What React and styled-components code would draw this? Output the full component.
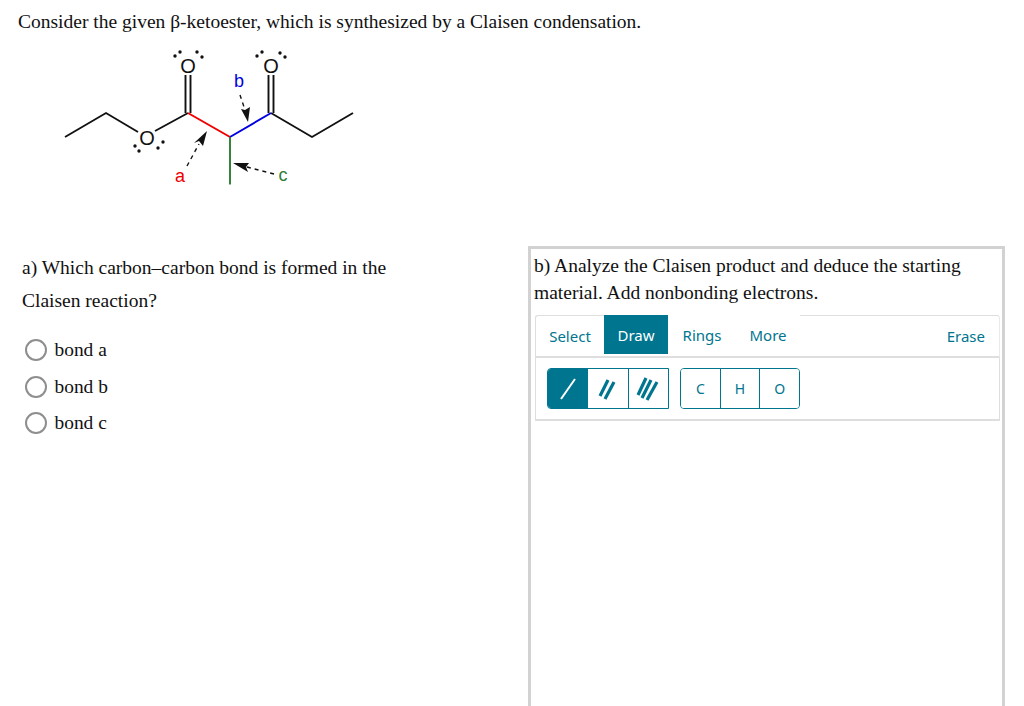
import React from "react";
import styled, { createGlobalStyle } from "styled-components";

const teal = "#00758f";
const serif = `"Liberation Serif", "Times New Roman", serif`;
const ui = `"Noto Sans", "Open Sans", sans-serif`;

const Global = createGlobalStyle`
html, body { margin: 0; padding: 0; background: #fff; overflow: hidden; }
* { box-sizing: border-box; }
`;
const Page = styled.div`
  width: 1024px;
  height: 706px;
  display: flex;
  flex-direction: column;
  font-family: ${serif};
  color: #111;
  overflow: hidden;
`;
const Title = styled.div`
  font-size: 19.5px;
  line-height: 22px;
  padding: 11px 0 0 18px;
`;
const Figure = styled.div`
  height: 213px;
  padding: 7px 0 0 50px;
`;
const Columns = styled.div`
  flex: 1;
  display: flex;
  justify-content: space-between;
  padding-right: 19px;
`;
const Left = styled.div`
  width: 420px;
  padding: 5px 0 0 22px;
`;
const Question = styled.div`
  font-size: 19.5px;
  line-height: 33px;
  width: 390px;
`;
const Options = styled.div`
  margin-top: 22px;
  display: flex;
  flex-direction: column;
  gap: 14.5px;
  margin-left: 3px;
`;
const Option = styled.label`
  display: flex;
  align-items: center;
  gap: 7.5px;
  font-size: 19.4px;
  line-height: 22px;
`;
const Radio = styled.span`
  width: 22px;
  height: 22px;
  border: 2px solid #8e8e8e;
  border-radius: 50%;
  background: #fff;
`;
const Panel = styled.div`
  width: 477px;
  border: 3px solid #d2d2d2;
  border-bottom: 0;
  padding: 3px 2px 0 4px;
`;
const Prompt = styled.div`
  font-size: 19.5px;
  line-height: 27px;
  padding-bottom: 9px;
  margin-left: -1px;
`;
const Tabs = styled.div`
  height: 43px;
  display: flex;
  align-items: stretch;
  border: 1px solid #dedede;
  border-bottom-width: 2px;
  border-right-color: #eaeaea;
  border-radius: 3px 3px 0 0;
  font-family: ${ui};
  font-size: 15px;
  color: ${teal};
`;
const Tab = styled.div`
  width: ${(p) => p.$w}px;
  margin-top: -1px;
  margin-bottom: ${(p) => (p.$active ? "2px" : "0")};
  padding-top: 10px;
  text-align: center;
  background: ${(p) => (p.$active ? teal : "#fff")};
  color: ${(p) => (p.$active ? "#fff" : teal)};
  height: ${(p) => (p.$active ? "39px" : "auto")};
`;
const SelectTab = styled(Tab)`
  margin-top: 0;
  background: transparent;
`;
const EraseTab = styled.div`
  margin-left: auto;
  padding: 10px 14px 0 0;
`;
const ToolRow = styled.div`
  height: 63px;
  display: flex;
  gap: 11px;
  padding: 10px 0 0 11px;
  border: 1px solid #dedede;
  border-top: 0;
  border-bottom-width: 2px;
`;
const Group = styled.div`
  display: flex;
  width: ${(p) => p.$w}px;
  height: 41px;
  border: 1.5px solid ${teal};
  border-radius: ${(p) => (p.$flat ? "4px 0 0 4px" : "4px")};
  overflow: hidden;
`;
const Tool = styled.div`
  flex: 1;
  display: flex;
  align-items: center;
  justify-content: center;
  font-family: ${ui};
  font-size: 14px;
  color: ${teal};
  background: ${(p) => (p.$active ? teal : "#fff")};
  & + & { border-left: 1.5px solid ${teal}; }
`;

const Molecule = () => (
  <svg width="320" height="160" viewBox="50 40 320 160" fontFamily="Liberation Sans, Arial, sans-serif">
    <g stroke="#111" strokeWidth="1.9" fill="none">
      <path d="M65 137L106 113L138 132M155 131L188 113M271 113L312 137L353 113" />
      <path d="M185.5 113V75M190.5 113V75M268.5 113V75M273.5 113V75" />
    </g>
    <path d="M188 113L230 137" stroke="#f00000" strokeWidth="1.9" />
    <path d="M230 137L271 113" stroke="#0000e0" strokeWidth="1.9" />
    <path d="M230 137V184.5" stroke="#2e7d32" strokeWidth="1.9" />
    <g fontSize="20" fill="#111" textAnchor="middle">
      <text x="188" y="73">O</text>
      <text x="271" y="73">O</text>
      <text x="147" y="145">O</text>
    </g>
    <g fill="#111">
      {[[175, 56], [180, 52], [197, 52], [202, 57], [257, 56], [262, 52], [280, 53], [285, 57], [135, 146], [139, 151], [158, 148], [163, 142]].map(([x, y]) => (
        <circle key={x + "-" + y} cx={x} cy={y} r="1.7" />
      ))}
    </g>
    <g stroke="#111" strokeWidth="1.4" strokeDasharray="4 4" fill="none">
      <path d="M187 166L199 144" />
      <path d="M240 95L245 110" />
      <path d="M274 174L247 167" />
    </g>
    <g fill="#111">
      <path d="M207 131L203 146L199 141L194 143Z" />
      <path d="M248 122L241 109L245 110L250 107Z" />
      <path d="M233 163L249 163L246 167L248 172Z" />
    </g>
    <g fontSize="18" textAnchor="middle">
      <text x="180" y="182" fill="#f00000">a</text>
      <text x="239" y="87" fill="#0000e0">b</text>
      <text x="283" y="181" fill="#2e7d32">c</text>
    </g>
  </svg>
);

const barSets = {
  1: [[-7, 10, 7, -10]],
  2: [[-8, 7, 0, -9], [-3, 10, 6, -7]],
  3: [[-10, 6, -2, -11], [-6, 9, 3, -9], [-1, 11, 9, -7]],
};

const Bars = ({ n, color }) => (
  <svg width="30" height="28" viewBox="-15 -14 30 28">
    {barSets[n].map(([x1, y1, x2, y2]) => (
      <line key={x1} x1={x1} y1={y1} x2={x2} y2={y2} stroke={color} strokeWidth={n === 1 ? 2 : 3.2} />
    ))}
  </svg>
);

export default function App() {
  return (
    <Page>
      <Global />
      <Title>Consider the given β-ketoester, which is synthesized by a Claisen condensation.</Title>
      <Figure><Molecule /></Figure>
      <Columns>
        <Left>
          <Question>a) Which carbon–carbon bond is formed in the Claisen reaction?</Question>
          <Options>
            <Option><Radio />bond a</Option>
            <Option><Radio />bond b</Option>
            <Option><Radio />bond c</Option>
          </Options>
        </Left>
        <Panel>
          <Prompt>b) Analyze the Claisen product and deduce the starting material. Add nonbonding electrons.</Prompt>
          <Tabs>
            <SelectTab $w={68}>Select</SelectTab>
            <Tab $w={64} $active>Draw</Tab>
            <Tab $w={68}>Rings</Tab>
            <Tab $w={64}>More</Tab>
            <EraseTab>Erase</EraseTab>
          </Tabs>
          <ToolRow>
            <Group $flat $w={122}>
              <Tool $active><Bars n={1} color="#fff" /></Tool>
              <Tool><Bars n={2} color={teal} /></Tool>
              <Tool><Bars n={3} color={teal} /></Tool>
            </Group>
            <Group $w={120}>
              <Tool>C</Tool>
              <Tool>H</Tool>
              <Tool>O</Tool>
            </Group>
          </ToolRow>
        </Panel>
      </Columns>
    </Page>
  );
}
